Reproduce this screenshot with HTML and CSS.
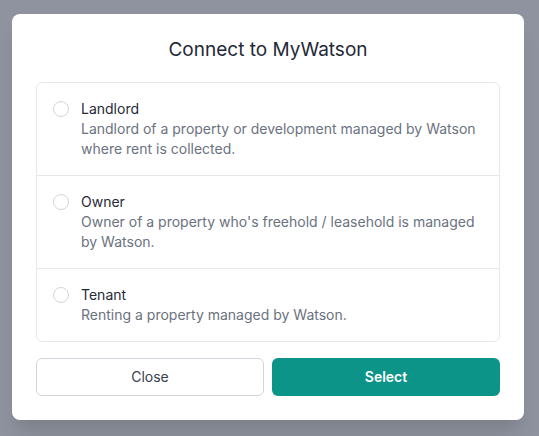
FILE: index.html
```html
<!DOCTYPE html>
<html lang="en">
<head>
<meta charset="utf-8">
<title>Connect to MyWatson</title>
<link rel="stylesheet" href="styles.css">
</head>
<body>
<div class="overlay">
  <div class="modal">
    <h3 class="title">Connect to MyWatson</h3>
    <div class="options">
      <label class="option">
        <span class="radio"></span>
        <span class="text">
          <span class="label">Landlord</span>
          <span class="desc">Landlord of a property or development managed by Watson where rent is collected.</span>
        </span>
      </label>
      <label class="option">
        <span class="radio"></span>
        <span class="text">
          <span class="label">Owner</span>
          <span class="desc">Owner of a property who's freehold / leasehold is managed by Watson.</span>
        </span>
      </label>
      <label class="option">
        <span class="radio"></span>
        <span class="text">
          <span class="label">Tenant</span>
          <span class="desc">Renting a property managed by Watson.</span>
        </span>
      </label>
    </div>
    <div class="actions">
      <button class="btn btn-close">Close</button>
      <button class="btn btn-select">Select</button>
    </div>
  </div>
</div>
</body>
</html>
```
FILE: styles.css
```css
* { box-sizing: border-box; }
html, body { margin: 0; height: 100%; }
body {
  font-family: Inter, "Noto Sans", sans-serif;
  background: #8f939f;
}
.overlay {
  height: 100%;
  padding: 14px 15px 16px 12px;
}
.modal {
  width: 512px;
  background: #fff;
  border-radius: 8px;
  padding: 24px;
  box-shadow: 0 20px 25px -5px rgba(0,0,0,0.1), 0 10px 10px -5px rgba(0,0,0,0.04);
}
.title {
  margin: 0;
  text-align: center;
  font-size: 19px;
  line-height: 24px;
  font-weight: 400;
  color: #1f2937;
}
.options {
  margin-top: 20px;
  border: 1px solid #e5e7eb;
  border-radius: 6px;
  display: flex;
  flex-direction: column;
}
.option {
  display: flex;
  align-items: flex-start;
  padding: 16px;
  border-top: 1px solid #e5e7eb;
}
.option:first-child { border-top: none; }
.radio {
  flex: none;
  width: 16px;
  height: 16px;
  margin-top: 2px;
  border: 1px solid #d1d5db;
  border-radius: 50%;
  background: #fff;
}
.text {
  margin-left: 12px;
  display: flex;
  flex-direction: column;
  font-size: 14px;
  line-height: 20px;
}
.label { color: #1f2937; font-weight: 400; }
.desc { color: #6b7280; }
.actions {
  margin-top: 16px;
  display: grid;
  grid-template-columns: 1fr 1fr;
  gap: 8px;
}
.btn {
  font-family: inherit;
  font-size: 14px;
  line-height: 20px;
  height: 38px;
  border-radius: 6px;
  padding: 8px 16px;
  cursor: pointer;
}
.btn-close {
  background: #fff;
  border: 1px solid #d1d5db;
  color: #374151;
  font-weight: 400;
}
.btn-select {
  background: #0d9488;
  border: 1px solid transparent;
  color: #fff;
  font-weight: 600;
}
```
